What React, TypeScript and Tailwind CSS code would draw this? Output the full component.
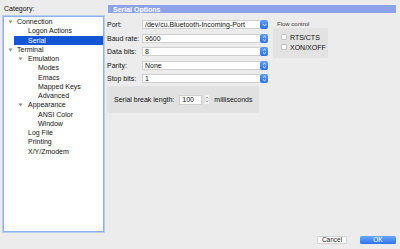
import React from 'react';

type Node = { label: string; level: number; arrow?: boolean; selected?: boolean };

const TREE: Node[] = [
  { label: 'Connection', level: 0, arrow: true },
  { label: 'Logon Actions', level: 1 },
  { label: 'Serial', level: 1, selected: true },
  { label: 'Terminal', level: 0, arrow: true },
  { label: 'Emulation', level: 1, arrow: true },
  { label: 'Modes', level: 2 },
  { label: 'Emacs', level: 2 },
  { label: 'Mapped Keys', level: 2 },
  { label: 'Advanced', level: 2 },
  { label: 'Appearance', level: 1, arrow: true },
  { label: 'ANSI Color', level: 2 },
  { label: 'Window', level: 2 },
  { label: 'Log File', level: 1 },
  { label: 'Printing', level: 1 },
  { label: 'X/Y/Zmodem', level: 1 },
];

const INDENT = ['pl-[13px]', 'pl-[24px]', 'pl-[34px]'];
const ARROW_LEFT = ['left-[4px]', 'left-[14px]', 'left-[24px]'];

function Disclosure() {
  return (
    <svg width="5" height="4" viewBox="0 0 5 4" className="block">
      <path d="M0.5 0.5 L4.5 0.5 L2.5 3.5 Z" fill="#8a8a8a" />
    </svg>
  );
}

function PopupButton({ stepper = true }: { stepper?: boolean }) {
  return (
    <div className="w-[8px] h-[9px] rounded-[2px] bg-gradient-to-b from-[#5f9df7] to-[#2a6fe8] flex items-center justify-center">
      {stepper ? (
        <svg width="5" height="7" viewBox="0 0 5 7">
          <path d="M1 2.6 L2.5 1.2 L4 2.6" stroke="#fff" strokeWidth="0.9" fill="none" />
          <path d="M1 4.4 L2.5 5.8 L4 4.4" stroke="#fff" strokeWidth="0.9" fill="none" />
        </svg>
      ) : (
        <svg width="5" height="4" viewBox="0 0 5 4">
          <path d="M1 1.2 L2.5 2.8 L4 1.2" stroke="#fff" strokeWidth="0.9" fill="none" />
        </svg>
      )}
    </div>
  );
}

function FieldRow({ label, value, stepper = true }: { label: string; value: string; stepper?: boolean }) {
  return (
    <div className="flex items-center h-[9px]">
      <span className="w-[35px] shrink-0 leading-none">{label}</span>
      <div className="w-[118px] h-[9px] bg-white border border-[#cfcfcf] border-r-0 flex items-center pl-[2px] leading-none">
        {value}
      </div>
      <PopupButton stepper={stepper} />
    </div>
  );
}

function Checkbox({ label }: { label: string }) {
  return (
    <div className="flex items-center gap-[3px] h-[6.5px]">
      <div className="w-[6px] h-[6px] bg-white border border-[#c4c4c4] rounded-[1px]" />
      <span className="leading-none">{label}</span>
    </div>
  );
}

export default function App() {
  return (
    <div
      className="w-[400px] h-[249px] bg-[#ececec] text-[7px] text-[#111] flex flex-col overflow-hidden"
      style={{ fontFamily: '"Liberation Sans", Arial, sans-serif' }}
    >
      <div className="flex flex-1">
        {/* Category tree */}
        <div className="ml-[3px] w-[101px] flex flex-col">
          <div className="h-[8px] mt-[5px] ml-[1px] leading-[8px]">Category:</div>
          <div className="mt-[3px] h-[216px] bg-white border border-[#8fb0ee] shadow-[0_0_0_1px_#b9cdf4]">
            {TREE.map((n) => (
              <div key={n.label} className="relative h-[9.25px] flex items-center">
                {n.arrow && (
                  <div className={`absolute top-[3px] ${ARROW_LEFT[n.level]}`}>
                    <Disclosure />
                  </div>
                )}
                {n.selected ? (
                  <div className="ml-[10px] flex-1 h-full bg-[#1256d6] text-white flex items-center pl-[14px] leading-none">
                    {n.label}
                  </div>
                ) : (
                  <span className={`${INDENT[n.level]} leading-none`}>{n.label}</span>
                )}
              </div>
            ))}
          </div>
        </div>

        {/* Serial options */}
        <div className="ml-[3px] w-[289px] flex flex-col">
          <div className="mt-[5px] ml-[1px] h-[8px] bg-[#8ea2ea] text-white font-bold flex items-center pl-[5px] leading-none">
            Serial Options
          </div>
          <div className="flex mt-[7px]">
            <div className="flex flex-col gap-[4.5px]">
              <FieldRow label="Port:" value="/dev/cu.Bluetooth-Incoming-Port" stepper={false} />
              <FieldRow label="Baud rate:" value="9600" />
              <FieldRow label="Data bits:" value="8" />
              <FieldRow label="Parity:" value="None" />
              <FieldRow label="Stop bits:" value="1" />
            </div>
            <div className="ml-[5px] flex flex-col">
              <div className="ml-[4px] mt-[1px] text-[6px] text-[#3a3a3a] leading-[6px]">Flow control</div>
              <div className="mt-[1px] w-[55px] h-[30px] bg-[#e2e2e2] rounded-[2px] flex flex-col gap-[3.5px] pl-[8px] pt-[6px]">
                <Checkbox label="RTS/CTS" />
                <Checkbox label="XON/XOFF" />
              </div>
            </div>
          </div>
          <div className="mt-[3px] w-[152px] h-[27px] bg-[#e1e1e1] rounded-[2px] flex items-center pl-[7px]">
            <span className="leading-none">Serial break length:</span>
            <div className="ml-[5px] w-[23px] h-[10px] bg-white border border-[#cfcfcf] flex items-center pl-[2px] leading-none">
              100
            </div>
            <div className="ml-[3px] w-[4px] h-[9px] bg-[#f6f6f6] rounded-[1px] flex items-center justify-center">
              <svg width="4" height="7" viewBox="0 0 4 7">
                <path d="M0.8 2.4 L2 1.2 L3.2 2.4" stroke="#555" strokeWidth="0.7" fill="none" />
                <path d="M0.8 4.6 L2 5.8 L3.2 4.6" stroke="#555" strokeWidth="0.7" fill="none" />
              </svg>
            </div>
            <span className="ml-[5px] leading-none">milliseconds</span>
          </div>
        </div>
      </div>

      {/* Footer buttons */}
      <div className="flex justify-end items-center gap-[13px] pr-[4px] pb-[5px] pt-[4px]">
        <button className="w-[30px] h-[8px] bg-white border border-[#d0d0d0] rounded-[1.5px] text-[6.5px] leading-none text-[#1c1c1c]">
          Cancel
        </button>
        <button className="w-[36px] h-[8px] bg-gradient-to-b from-[#6aa6fb] to-[#2d73ee] rounded-[1.5px] text-[6.5px] leading-none text-white">
          OK
        </button>
      </div>
    </div>
  );
}
